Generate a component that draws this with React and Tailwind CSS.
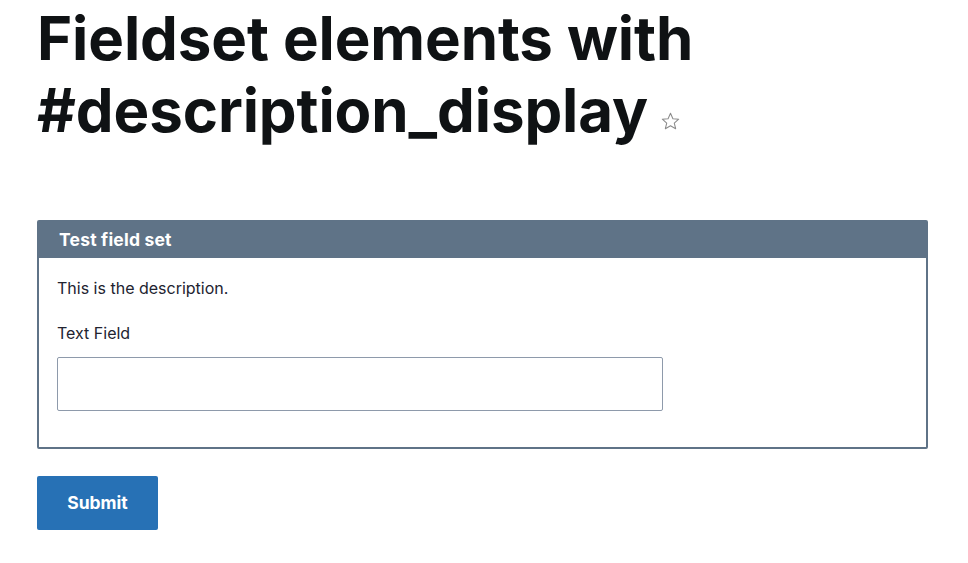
import React from "react";

const font = { fontFamily: "Inter, 'Liberation Sans', sans-serif" };

const Star = () => (
  <svg width="21" height="21" viewBox="0 0 20 20" className="inline-block ml-3 align-baseline">
    <path
      d="M10 2.2l2.3 5.1 5.5.5-4.2 3.7 1.3 5.4L10 14.1l-4.9 2.8 1.3-5.4-4.2-3.7 5.5-.5z"
      fill="none"
      stroke="#8b8b8b"
      strokeWidth="1"
      strokeLinejoin="round"
    />
  </svg>
);

export default function App() {
  return (
    <div className="min-h-screen bg-white text-[#222330] px-[37px] pt-[2px]" style={font}>
      <h1 className="text-[60px] leading-[72px] font-bold text-[#0f1214] tracking-[-0.1px]">
        Fieldset elements with
        <br />
        #description_display
        <Star />
      </h1>

      <form className="mt-[74px] w-[891px]">
        <fieldset className="border-2 border-[#5f7387] rounded-[2px]">
          <div className="bg-[#5f7387] h-[36px] flex items-center px-[20px]">
            <span className="text-white font-bold text-[17.5px] tracking-[0.2px]">Test field set</span>
          </div>
          <div className="px-[18px] pt-[20px] pb-[36px]">
            <p className="text-[16px] leading-[20px] text-[#222330]">This is the description.</p>
            <label className="block mt-[25px] text-[16px] leading-[20px] text-[#222330]">Text Field</label>
            <input
              type="text"
              className="mt-[14px] block w-[606px] h-[54px] border border-[#8e9aab] rounded-[2px] px-3"
            />
          </div>
        </fieldset>

        <button
          type="submit"
          className="mt-[27px] w-[121px] h-[54px] bg-[#2771b5] text-white font-bold text-[17.5px] rounded-[2px]"
        >
          Submit
        </button>
      </form>
    </div>
  );
}
